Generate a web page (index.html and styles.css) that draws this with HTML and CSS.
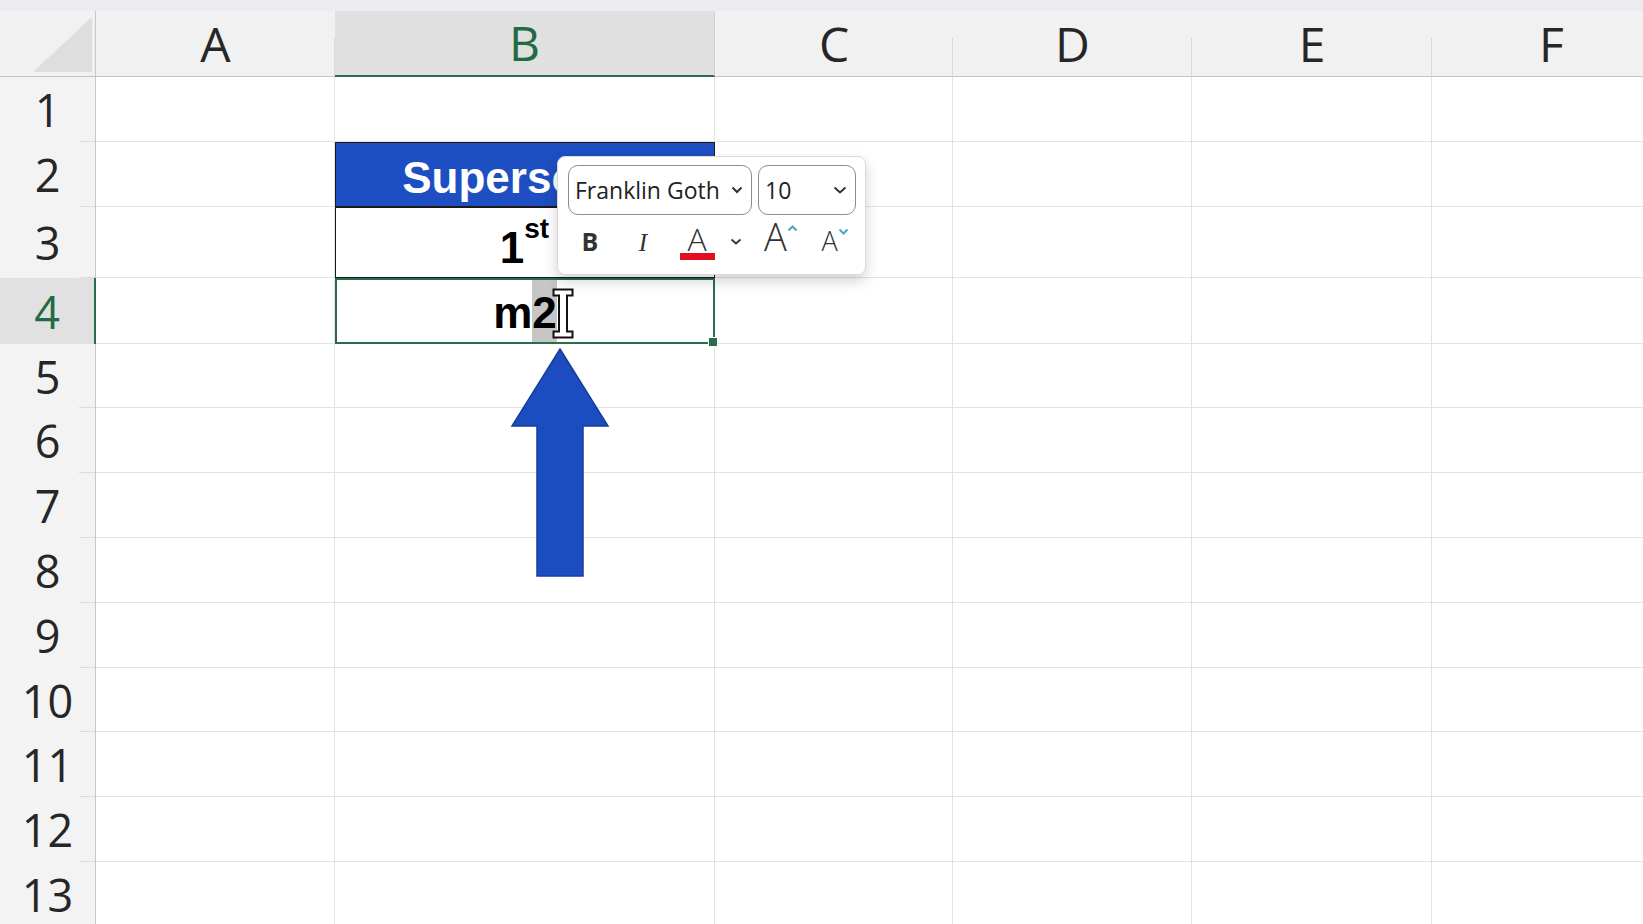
FILE: index.html
```html
<!DOCTYPE html>
<html lang="en">

<head>
    <meta charset="UTF-8">
    <meta name="viewport" content="width=device-width, initial-scale=1.0">
    <title>Superscript - Excel</title>
    <link rel="stylesheet" href="styles.css">
</head>

<body>
    <div class="app">
        <div class="titlebar"></div>

        <div class="sheet">
            <div class="row head">
                <div class="corner">
                    <svg width="95" height="65" viewBox="0 0 95 65"><polygon points="92,6 92,61 33,61" fill="#dedede"/></svg>
                </div>
                <div class="col">A</div>
                <div class="col active">B</div>
                <div class="col">C</div>
                <div class="col">D</div>
                <div class="col">E</div>
                <div class="col">F</div>
                <div class="col"></div>
            </div>

            <div class="row">
                <div class="num">1</div>
                <div class="cell"></div><div class="cell"></div><div class="cell"></div>
                <div class="cell"></div><div class="cell"></div><div class="cell"></div><div class="cell"></div>
            </div>
            <div class="row">
                <div class="num">2</div>
                <div class="cell"></div>
                <div class="cell boxed heading"><span>Superscript</span></div>
                <div class="cell"></div><div class="cell"></div><div class="cell"></div><div class="cell"></div><div class="cell"></div>
            </div>
            <div class="row tall">
                <div class="num">3</div>
                <div class="cell"></div>
                <div class="cell boxed"><span>1<sup class="sup">st</sup></span></div>
                <div class="cell"></div><div class="cell"></div><div class="cell"></div><div class="cell"></div><div class="cell"></div>
            </div>
            <div class="row sel">
                <div class="num active">4</div>
                <div class="cell"></div>
                <div class="cell current">
                    <span>m</span><span class="picked">2</span>
                    <!-- text cursor -->
                    <svg class="ibeam" width="22" height="51" viewBox="0 0 22 51">
                        <path d="M1.5 1.5H20.5V7.5H15V43.5H20.5V49.5H1.5V43.5H7V7.5H1.5Z" fill="#fff" stroke="#111" stroke-width="2"/>
                    </svg>
                </div>
                <div class="cell"></div><div class="cell"></div><div class="cell"></div><div class="cell"></div><div class="cell"></div>
            </div>
            <div class="row short">
                <div class="num">5</div>
                <div class="cell"></div><div class="cell"></div><div class="cell"></div>
                <div class="cell"></div><div class="cell"></div><div class="cell"></div><div class="cell"></div>
            </div>
            <div class="row">
                <div class="num">6</div>
                <div class="cell"></div><div class="cell"></div><div class="cell"></div>
                <div class="cell"></div><div class="cell"></div><div class="cell"></div><div class="cell"></div>
            </div>
            <div class="row">
                <div class="num">7</div>
                <div class="cell"></div><div class="cell"></div><div class="cell"></div>
                <div class="cell"></div><div class="cell"></div><div class="cell"></div><div class="cell"></div>
            </div>
            <div class="row">
                <div class="num">8</div>
                <div class="cell"></div><div class="cell"></div><div class="cell"></div>
                <div class="cell"></div><div class="cell"></div><div class="cell"></div><div class="cell"></div>
            </div>
            <div class="row">
                <div class="num">9</div>
                <div class="cell"></div><div class="cell"></div><div class="cell"></div>
                <div class="cell"></div><div class="cell"></div><div class="cell"></div><div class="cell"></div>
            </div>
            <div class="row short">
                <div class="num">10</div>
                <div class="cell"></div><div class="cell"></div><div class="cell"></div>
                <div class="cell"></div><div class="cell"></div><div class="cell"></div><div class="cell"></div>
            </div>
            <div class="row">
                <div class="num">11</div>
                <div class="cell"></div><div class="cell"></div><div class="cell"></div>
                <div class="cell"></div><div class="cell"></div><div class="cell"></div><div class="cell"></div>
            </div>
            <div class="row">
                <div class="num">12</div>
                <div class="cell"></div><div class="cell"></div><div class="cell"></div>
                <div class="cell"></div><div class="cell"></div><div class="cell"></div><div class="cell"></div>
            </div>
            <div class="row">
                <div class="num">13</div>
                <div class="cell"></div><div class="cell"></div><div class="cell"></div>
                <div class="cell"></div><div class="cell"></div><div class="cell"></div><div class="cell"></div>
            </div>
        </div>

        <!-- floating mini toolbar -->
        <div class="minibar">
            <div class="pickers">
                <div class="picker font">
                    <span>Franklin Goth</span>
                    <svg width="12" height="8" viewBox="0 0 12 8"><polyline points="1.5,1.5 6,6 10.5,1.5" fill="none" stroke="#333" stroke-width="2"/></svg>
                </div>
                <div class="picker size">
                    <span>10</span>
                    <svg width="14" height="8" viewBox="0 0 14 8"><polyline points="1.5,1.5 7,6.5 12.5,1.5" fill="none" stroke="#333" stroke-width="2"/></svg>
                </div>
            </div>
            <div class="tools">
                <div class="t-bold">B</div>
                <div class="t-italic">I</div>
                <div class="t-color">A<span class="bar"></span></div>
                <div class="t-drop">
                    <svg width="12" height="7" viewBox="0 0 12 7"><polyline points="1.5,1.5 6,5.5 10.5,1.5" fill="none" stroke="#333" stroke-width="1.8"/></svg>
                </div>
                <div class="t-grow"><span>A</span><svg class="caret up" width="11" height="7" viewBox="0 0 11 7"><polyline points="1.5,5.5 5.5,1.5 9.5,5.5" fill="none" stroke="#4aa7c4" stroke-width="2"/></svg></div>
                <div class="t-shrink"><span>A</span><svg class="caret down" width="11" height="7" viewBox="0 0 11 7"><polyline points="1.5,1.5 5.5,5.5 9.5,1.5" fill="none" stroke="#4aa7c4" stroke-width="2"/></svg></div>
            </div>
        </div>

        <svg class="arrow" width="100" height="230" viewBox="0 0 100 230">
            <polygon points="50,1 98,78 73,78 73,228 27,228 27,78 2,78" fill="#1b4cc0" stroke="#163e9c" stroke-width="1.5"/>
        </svg>
    </div>
</body>

</html>
```

FILE: styles.css
```css
* {
    box-sizing: border-box;
}

html,
body {
    margin: 0;
    height: 100%;
    overflow: hidden;
}

body {
    background: #fff;
    font-family: "Open Sans", "Noto Sans", sans-serif;
    color: #262626;
}

.app {
    position: relative;
    height: 924px;
}

.titlebar {
    height: 11px;
    background: #ecebf0;
}

/* grid */
.row {
    display: grid;
    grid-template-columns: 96px 239px 380px 238px 239px 240px 239px 1fr;
    height: 65px;
}

.row.head,
.row.sel {
    height: 66px;
}

.row.tall {
    height: 71px;
}

.row.short {
    height: 64px;
}

.corner {
    background: #f1f1f1;
    border-right: 1px solid #c8c8c8;
    border-bottom: 1px solid #c4c4c4;
}

.corner svg {
    display: block;
}

.col {
    display: flex;
    align-items: center;
    justify-content: center;
    background: linear-gradient(#d9d9d9, #d9d9d9) right bottom / 1px 58% no-repeat, #f1f1f1;
    border-bottom: 1px solid #c4c4c4;
    font-size: 48px;
    line-height: 1;
}

.col.active {
    background: #e0e0e0;
    border-right: 1px solid #d0d0d0;
    border-bottom: 2px solid #2b6d4b;
    color: #1f6b43;
}

.num {
    display: flex;
    align-items: center;
    justify-content: center;
    background: linear-gradient(#dcdcdc, #dcdcdc) right bottom / 16px 1px no-repeat, #f3f3f3;
    border-right: 1px solid #c8c8c8;
    font-size: 45px;
    line-height: 1;
}

.num.active {
    background: #e1e1e1;
    border-right: 2px solid #2b6d4b;
    color: #1f6b43;
}

.cell {
    border-right: 1px solid #e2e2e2;
    border-bottom: 1px solid #e2e2e2;
}

.cell.boxed {
    display: flex;
    justify-content: center;
    align-items: flex-end;
    padding-bottom: 7px;
    border-color: #1a1a1a;
    box-shadow: inset 1px 1px 0 #1a1a1a;
    font: 700 44px/1 "Liberation Sans", Arial, sans-serif;
    color: #000;
}

.cell.heading {
    padding-bottom: 6px;
    background: #1d4ec2;
    color: #fff;
}

.sup {
    font-size: 28px;
    line-height: 1;
    vertical-align: 25px;
}

.cell.current {
    position: relative;
    display: flex;
    justify-content: center;
    border: 2px solid #2b6d4b;
    font: 700 44px/1 "Liberation Sans", Arial, sans-serif;
    color: #000;
}

.current span {
    display: flex;
    align-items: flex-end;
    padding-bottom: 7px;
}

.current .picked {
    background: #c6c6c6;
}

.current::after {
    content: "";
    position: absolute;
    right: -5px;
    bottom: -5px;
    width: 8px;
    height: 8px;
    background: #2b6d4b;
    border: 1px solid #fff;
}

.ibeam {
    position: absolute;
    left: 215px;
    top: 8px;
}

/* mini toolbar */
.minibar {
    position: absolute;
    left: 557px;
    top: 156px;
    width: 309px;
    height: 119px;
    padding: 8px 0 0 10px;
    background: #fff;
    border: 1px solid #dadada;
    border-radius: 8px;
    box-shadow: 0 6px 14px rgba(0, 0, 0, 0.18);
}

.pickers {
    display: flex;
    gap: 6px;
}

.picker {
    display: flex;
    align-items: center;
    justify-content: space-between;
    height: 50px;
    padding: 0 8px 0 6px;
    border: 1.5px solid #8d8d8d;
    border-radius: 10px;
    font-size: 23px;
    color: #222;
}

.picker.font {
    width: 184px;
}

.picker.size {
    width: 98px;
}

.tools {
    display: flex;
    align-items: baseline;
    margin-top: 2px;
    color: #333;
}

.tools > div {
    text-align: center;
    line-height: 1;
}

.t-bold {
    width: 44px;
    font-size: 25px;
    font-weight: 700;
}

.t-italic {
    width: 62px;
    font-family: "Liberation Serif", serif;
    font-size: 25px;
    font-style: italic;
}

.t-color {
    width: 46px;
    font-size: 32px;
    font-weight: 300;
}

.t-color .bar {
    display: block;
    width: 35px;
    height: 7px;
    margin: -2px auto 0;
    background: #e0101f;
}

.t-drop {
    width: 32px;
}

.t-drop svg {
    vertical-align: 6px;
}

.t-grow {
    width: 58px;
    font-size: 38px;
    font-weight: 300;
}

.t-shrink {
    width: 50px;
    font-size: 27px;
    font-weight: 300;
}

.caret.up {
    vertical-align: 19px;
}

.caret.down {
    vertical-align: 16px;
}

.arrow {
    position: absolute;
    left: 510px;
    top: 348px;
}
```
